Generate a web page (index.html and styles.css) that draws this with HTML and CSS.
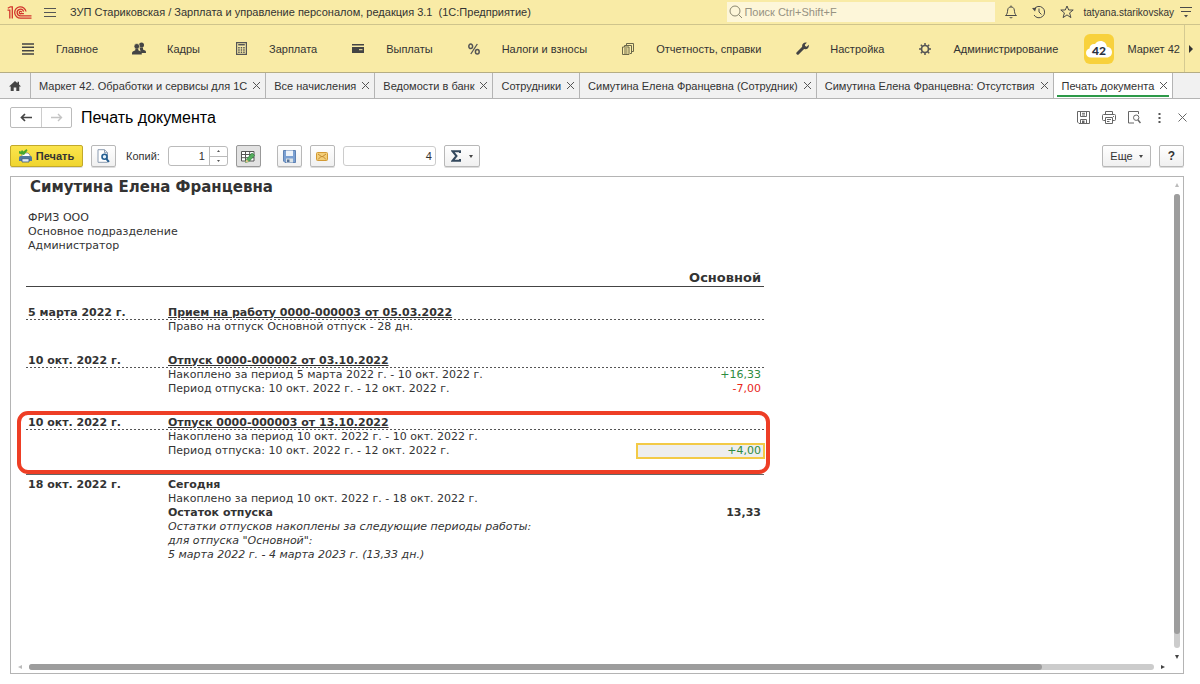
FILE: index.html
```
<!DOCTYPE html>
<html lang="ru">
  <head>
    <meta charset="UTF-8" />
    <meta name="viewport" content="width=device-width, initial-scale=1.0" />
    <title>Печать документа</title>
    <link rel="stylesheet" href="styles.css">
  </head>

  <body>
    <header class="titlebar">
      <svg class="logo" width="25" height="13" viewBox="0 0 25 13" fill="none" stroke="#d2352c" stroke-width="1.3">
        <path d="M0.5 4.2h2.3v8.3M0.8 2.2L3.4 0.8h1.9v11.7" />
        <path d="M19 5.5A5.7 5.7 0 1 0 13.600 12.200H24.500" />
        <path d="M16.600 5.600A3.300 3.300 0 1 0 13.600 9.800H24.500" />
        <path d="M14.700 6.300a1.200 1.200 0 1 0-.8 1.400h3" />
      </svg>
      <button class="icon_btn burger" aria-label="Меню">
        <svg width="12" height="11" viewBox="0 0 12 11" stroke="#555" stroke-width="1"><path d="M0 1.500h12M0 5.500h12M0 9.500h12" /></svg>
      </button>
      <span class="app_title">ЗУП Стариковская / Зарплата и управление персоналом, редакция 3.1&nbsp; (1С:Предприятие)</span>
      <label class="search">
        <svg width="14" height="14" viewBox="0 0 14 14" fill="none" stroke="#8b8770"><circle cx="6" cy="6" r="5" /><path d="M9.500 9.500l3.500 3.500" /></svg>
        <input type="text" placeholder="Поиск Ctrl+Shift+F" aria-label="Поиск" />
      </label>
      <div class="user_tools">
        <button class="icon_btn" aria-label="Уведомления">
          <svg width="14" height="14" viewBox="0 0 14 14" fill="none" stroke="#4a4a4a"><path d="M1.500 10.500c2-1.500 1.800-3 2.200-5.500C4 2.700 5.300 2 7 2s3 .7 3.300 3c.4 2.500.2 4 2.200 5.500z" /><path d="M7 2V.5" /><path d="M5 12.200h4L7 13.500z" fill="#4a4a4a" stroke="none" /></svg>
        </button>
        <button class="icon_btn" aria-label="История">
          <svg width="14" height="14" viewBox="0 0 14 14" fill="none" stroke="#4a4a4a"><path d="M2 4.200A5.700 5.700 0 1 1 2 10" /><path d="M7 3.500V7l2.500 2.500" /><path d="M0 3l4.300-.2L3 6.500z" fill="#4a4a4a" stroke="none" /></svg>
        </button>
        <button class="icon_btn" aria-label="Избранное">
          <svg width="14" height="14" viewBox="0 0 14 14" fill="none" stroke="#4a4a4a"><path d="M7 1l1.700 4h4.500L9.600 7.900l1.300 4.700L7 9.900l-3.900 2.700 1.300-4.700L.8 5h4.500z" /></svg>
        </button>
        <a class="user" href="#">tatyana.starikovskay</a>
        <button class="icon_btn" aria-label="Настройки окна">
          <svg width="12" height="12" viewBox="0 0 12 12"><path d="M0 1.500h12M1 5.500h10" stroke="#4a4a4a" /><path d="M4 9h4l-2 2.500z" fill="#4a4a4a" /></svg>
        </button>
      </div>
    </header>

    <nav class="sections">
      <a href="#"><span class="section_icon"><svg width="12" height="12" viewBox="0 0 12 12" stroke="#444" stroke-width="1.400"><path d="M0 1h12M0 4.300h12M0 7.700h12M0 11h12" /></svg></span>Главное</a>
      <a href="#"><span class="section_icon"><svg width="14" height="13" viewBox="0 0 14 13" fill="#444"><circle cx="9.500" cy="3" r="2.500" /><path d="M7.500 5.500h3.500v2l2.500 1.200c.4.300.5 1 .5 2.300H9z" /><circle cx="4.800" cy="4.300" r="2.800" stroke="#f9eba6" stroke-width=".7" /><path d="M3.300 6.500h3v1.700L9 9.500c.7.400.8 1.500.8 3H0c0-1.500.1-2.600.8-3l2.500-1.300z" /></svg></span>Кадры</a>
      <a href="#"><span class="section_icon"><svg width="11" height="13" viewBox="0 0 11 13"><path d="M.6.600h9.800v11.800H.6z" fill="none" stroke="#555" stroke-width="1.200" /><path d="M2.200 2.700h6.600" stroke="#555" stroke-width="1.500" /><path d="M2.200 5.700h6.600M2.200 8h6.600M2.200 10.300h6.600" stroke="#555" stroke-width="1.500" stroke-dasharray="1.500 1" /></svg></span>Зарплата</a>
      <a href="#"><span class="section_icon"><svg width="12" height="9" viewBox="0 0 12 9"><path d="M0 0h12v1.500H0zM0 3h12v6H0z" fill="#444" /><path d="M7 5.700h3.500" stroke="#f9eba6" /></svg></span>Выплаты</a>
      <a href="#"><span class="section_icon"><svg width="12" height="12" viewBox="0 0 12 12" fill="none" stroke="#555" stroke-width="1.500"><ellipse cx="2.700" cy="3.300" rx="1.900" ry="2.300" /><ellipse cx="9.300" cy="8.700" rx="1.900" ry="2.300" /><path d="M9.300 1L2.800 11" stroke-width="1.300" /></svg></span>Налоги и взносы</a>
      <a href="#"><span class="section_icon"><svg width="12" height="12" viewBox="0 0 12 12" fill="none" stroke="#6b6749"><path d="M4.500 2V.5h7v8H10M2.500 4V2.500h7v8H8" /><path d="M.5 4h6.500v7.500H.5zM2 6h3.500M2 8h3.500M2 10h3.500" /></svg></span>Отчетность, справки</a>
      <a href="#"><span class="section_icon"><svg width="13" height="13" viewBox="0 0 13 13"><path d="M1.800 11.200L8 5" stroke="#444" stroke-width="3" stroke-linecap="round" /><path d="M10.800.7L8.800 2.800l.4 1.500 1.500.4 2-2c.7 2.300-.8 4.600-3.200 4.600-1.900 0-3.400-1.500-3.400-3.500C6.100 1.500 8.500-.1 10.800.7z" fill="#444" /></svg></span>Настройка</a>
      <a href="#"><span class="section_icon"><svg width="12" height="12" viewBox="0 0 12 12" fill="none" stroke="#555"><circle cx="6" cy="6" r="3.500" stroke-width="1.700" /><path d="M6 0v2.500M6 9.500V12M0 6h2.500M9.500 6H12M1.800 1.800l1.700 1.700M8.500 8.500l1.700 1.700M10.200 1.800L8.500 3.500M3.500 8.500l-1.700 1.700" stroke-width="1.500" /></svg></span>Администрирование</a>
      <a href="#"><span class="section_icon market"><svg width="30" height="30" viewBox="0 0 30 30"><rect width="30" height="30" rx="6" fill="#f8d13c" /><path d="M7 23.500c-3 0-5-2-5-4.500 0-2.300 1.500-4 3.500-4.400C5.500 11.500 8 9.500 11 10c1.300-2 3.300-3 5.500-3 3.600 0 6 2.400 6.300 5.700 3 .1 5.200 2.300 5.200 5.300 0 3.200-2.200 5.500-5.300 5.500z" fill="#fff" /><text x="15" y="21" text-anchor="middle">42</text></svg></span>Маркет 42</a>
      <button class="scroll_right" aria-label="Дальше"><svg width="4" height="8" viewBox="0 0 4 8"><path d="M0 0l4 4-4 4z" fill="#333" /></svg></button>
    </nav>

    <div class="tabs">
      <button class="home" aria-label="Начальная страница"><svg width="12" height="10" viewBox="0 0 12 10" fill="#444"><path d="M6 0L0 5.500h1.700V10h3V6.500h2.600V10h3V5.500H12L10 3.600V.7H8.500v1.500z" /></svg></button>
      <div class="tab"><a href="#">Маркет 42. Обработки и сервисы для 1С</a><button class="close" aria-label="Закрыть"></button></div>
      <div class="tab"><a href="#">Все начисления</a><button class="close" aria-label="Закрыть"></button></div>
      <div class="tab"><a href="#">Ведомости в банк</a><button class="close" aria-label="Закрыть"></button></div>
      <div class="tab"><a href="#">Сотрудники</a><button class="close" aria-label="Закрыть"></button></div>
      <div class="tab"><a href="#">Симутина Елена Францевна (Сотрудник)</a><button class="close" aria-label="Закрыть"></button></div>
      <div class="tab"><a href="#">Симутина Елена Францевна: Отсутствия</a><button class="close" aria-label="Закрыть"></button></div>
      <div class="tab active"><a href="#">Печать документа</a><button class="close" aria-label="Закрыть"></button></div>
    </div>

    <main class="form">
      <div class="form_head">
        <div class="history">
          <button aria-label="Назад"><svg width="12" height="9" viewBox="0 0 12 9" fill="none" stroke="#444" stroke-width="1.700"><path d="M12 4.500H1.500M5 1L1.500 4.500 5 8" /></svg></button>
          <button aria-label="Вперед" disabled><svg width="12" height="9" viewBox="0 0 12 9" fill="none" stroke="#c4c4c4" stroke-width="1.400"><path d="M0 4.500h10.500M7 1l3.500 3.500L7 8" /></svg></button>
        </div>
        <h1>Печать документа</h1>
        <div class="form_tools">
          <button class="icon_btn" aria-label="Сохранить"><svg width="13" height="13" viewBox="0 0 13 13" fill="none" stroke="#666"><path d="M.5.500h12v12H2L.5 11zM3.500.500v5h6v-5M5 2.300h3M5 4h3M3.500 12.500v-4h6v4" /><path d="M5 9.500h2.500v2.500H5z" fill="#666" stroke="none" /></svg></button>
          <button class="icon_btn" aria-label="Печать"><svg width="14" height="13" viewBox="0 0 14 13" fill="none" stroke="#666"><path d="M3.500 3.500v-3h7v3M3.500 9.500H1.500q-1 0-1-1v-4q0-1 1-1h11q1 0 1 1v4q0 1-1 1h-2" /><path d="M3.500 6.500h7v6h-7zM5 8.500h4M5 10.500h2.500M11 5.500h1" /></svg></button>
          <button class="icon_btn" aria-label="Просмотр"><svg width="13" height="13" viewBox="0 0 13 13" fill="none" stroke="#666"><path d="M10.500 3V.5H.5v11.500H6" /><circle cx="8.200" cy="6.700" r="2.700" /><path d="M10 9l2.500 3" stroke-width="1.500" /></svg></button>
          <button class="icon_btn" aria-label="Еще"><svg width="13" height="10" viewBox="0 0 13 10" fill="#555"><path d="M5.500 0h2v2h-2zM5.500 4h2v2h-2zM5.500 8h2v2h-2z" /></svg></button>
          <button class="icon_btn" aria-label="Закрыть"><svg width="9" height="9" viewBox="0 0 9 9" stroke="#666"><path d="M.5.500l8 8M8.500.500l-8 8" /></svg></button>
        </div>
      </div>

      <div class="toolbar">
        <button class="btn print">
          <svg width="13" height="14" viewBox="0 0 13 14"><path d="M3 4h6l2 2v2H3z" fill="#fff" stroke="#678" stroke-width=".7" /><path d="M1.500 7h10q1.500 0 1.500 1.500v3.500H0V8.500Q0 7 1.500 7z" fill="#52799e" /><path d="M3 9.700h7V13H3z" fill="#dfeaf5" stroke="#38597b" stroke-width=".8" /><path d="M0 2l2 .5L3 1l1.500 1.500L7.500 0l1 1.500L5 6 0 4.500z" fill="#45a82d" /></svg>
          Печать
        </button>
        <button class="btn square" aria-label="Предварительный просмотр">
          <svg width="13" height="14" viewBox="0 0 13 14" fill="none"><path d="M1 .7h6.500l3 3v9.600H1z" fill="#fff" stroke="#8a9bb0" /><path d="M7.500.7v3h3" stroke="#8a9bb0" /><circle cx="7.500" cy="7.700" r="2.500" stroke="#255f92" stroke-width="1.600" fill="#e6f2fb" /><path d="M9.300 9.800l2.700 3" stroke="#255f92" stroke-width="2" /></svg>
        </button>
        <label class="copies_label" for="copies">Копий:</label>
        <div class="copies">
          <input type="text" id="copies" value="1" />
          <div class="spin">
            <button aria-label="Больше"><svg width="3" height="2" viewBox="0 0 3 2"><path d="M0 2h3L1.500 0z" fill="#555" /></svg></button>
            <button aria-label="Меньше"><svg width="3" height="2" viewBox="0 0 3 2"><path d="M0 0h3L1.500 2z" fill="#555" /></svg></button>
          </div>
        </div>
        <button class="btn square pressed" aria-label="Редактирование">
          <svg width="14" height="13" viewBox="0 0 14 13"><path d="M.5 1.500h12.500v9.500H.5z" fill="#fff" /><path d="M.5 1.500h12.500v9.500H.5zM.5 4.500h12.500M.5 7.700h12.500M4.500 1.500v9.500M8.700 1.500v9.500" fill="none" stroke="#555" /><path d="M4.500 12.500l.8-3L11 3l2.700 2.300L8 11.500z" fill="#53ad5c" stroke="#2f7d3b" stroke-width=".6" /><path d="M4.500 12.500l.8-3L8 11.500z" fill="#e9c58c" /></svg>
        </button>
        <button class="btn square group_start" aria-label="Сохранить">
          <svg width="13" height="13" viewBox="0 0 13 13"><path d="M.5.500h12v12H2L.5 11z" fill="#7ba0d2" stroke="#5f82b3" /><path d="M3 .500h7v5.500H3z" fill="#eef3f9" /><path d="M3 8.500h7v4H3z" fill="#dce3e6" /><path d="M4 9.500h2.500v2.500H4z" fill="#577195" /></svg>
        </button>
        <button class="btn square" aria-label="Отправить по почте">
          <svg width="12" height="9" viewBox="0 0 12 9"><rect x=".5" y=".5" width="11" height="8" rx="1" fill="#f3ce78" stroke="#d39a34" /><path d="M2 2l4 3 4-3M2 7.500l3-3M10 7.500l-3-3" fill="none" stroke="#b87a20" stroke-width=".8" /></svg>
        </button>
        <input class="sum_field" type="text" value="4" aria-label="Сумма" />
        <button class="btn sigma" aria-label="Сумма">
          <svg width="10" height="12" viewBox="0 0 10 12"><path d="M9 3V1.200H1.500L5.500 6l-4 4.800H9V9" fill="none" stroke="#34495e" stroke-width="2" /></svg>
          <span class="caret"></span>
        </button>
        <button class="btn more">Еще <span class="caret"></span></button>
        <button class="btn help">?</button>
      </div>

      <div class="viewer">
        <div class="sheet">
          <h2>Симутина Елена Францевна</h2>
          <p class="employee">
            ФРИЗ ООО<br />
            Основное подразделение<br />
            Администратор
          </p>

          <table class="report">
            <thead>
              <tr>
                <th class="date"></th>
                <th></th>
                <th class="amount">Основной</th>
              </tr>
            </thead>
            <tbody>
              <tr class="event"><td>5 марта 2022 г.</td><td><a href="#">Прием на работу 0000-000003 от 05.03.2022</a></td><td></td></tr>
              <tr><td></td><td>Право на отпуск Основной отпуск - 28 дн.</td><td></td></tr>
              <tr class="space"><td colspan="3"></td></tr>
            </tbody>
            <tbody>
              <tr class="event"><td>10 окт. 2022 г.</td><td><a href="#">Отпуск 0000-000002 от 03.10.2022</a></td><td></td></tr>
              <tr><td></td><td>Накоплено за период 5 марта 2022 г. - 10 окт. 2022 г.</td><td class="amount plus">+16,33</td></tr>
              <tr><td></td><td>Период отпуска: 10 окт. 2022 г. - 12 окт. 2022 г.</td><td class="amount minus">-7,00</td></tr>
              <tr class="space"><td colspan="3"></td></tr>
            </tbody>
            <tbody class="marked">
              <tr class="event"><td>10 окт. 2022 г.<span class="frame"></span></td><td><a href="#">Отпуск 0000-000003 от 13.10.2022</a></td><td></td></tr>
              <tr><td></td><td>Накоплено за период 10 окт. 2022 г. - 10 окт. 2022 г.</td><td></td></tr>
              <tr><td></td><td>Период отпуска: 10 окт. 2022 г. - 12 окт. 2022 г.</td><td class="amount plus selected">+4,00</td></tr>
              <tr class="space"><td colspan="3"></td></tr>
            </tbody>
            <tbody class="today">
              <tr class="bold"><td>18 окт. 2022 г.</td><td>Сегодня</td><td></td></tr>
              <tr><td></td><td>Накоплено за период 10 окт. 2022 г. - 18 окт. 2022 г.</td><td></td></tr>
              <tr class="bold"><td></td><td>Остаток отпуска</td><td class="amount">13,33</td></tr>
              <tr class="note"><td></td><td>Остатки отпусков накоплены за следующие периоды работы:</td><td></td></tr>
              <tr class="note"><td></td><td>для отпуска "Основной":</td><td></td></tr>
              <tr class="note"><td></td><td>5 марта 2022 г. - 4 марта 2023 г. (13,33 дн.)</td><td></td></tr>
            </tbody>
          </table>
        </div>

        <div class="vscroll">
          <svg width="4" height="4" viewBox="0 0 4 4"><path d="M0 4h4L2 0z" fill="#bbb" /></svg>
          <div class="track"><div class="thumb"></div></div>
          <svg width="4" height="4" viewBox="0 0 4 4"><path d="M0 0h4L2 4z" fill="#444" /></svg>
        </div>
        <div class="hscroll">
          <svg width="4" height="4" viewBox="0 0 4 4"><path d="M4 0v4L0 2z" fill="#bbb" /></svg>
          <div class="track"><div class="thumb"></div></div>
          <svg width="4" height="4" viewBox="0 0 4 4"><path d="M0 0v4l4-2z" fill="#444" /></svg>
        </div>
      </div>
    </main>
  </body>
</html>
```

FILE: styles.css
```
* {
  box-sizing: border-box;
}

html,
body {
  width: 100%;
  height: 100%;
  margin: 0;
  padding: 0;
}

body {
  display: flex;
  flex-direction: column;
  font-family: "Liberation Sans", Arial, sans-serif;
  font-size: 11px;
  color: #333;
  background-color: #fff;
}

button,
input {
  font-family: inherit;
  font-size: inherit;
  color: inherit;
  margin: 0;
}

button {
  display: flex;
  justify-content: center;
  align-items: center;
  padding: 0;
  border: none;
  background: none;
  cursor: pointer;
}

a {
  color: inherit;
  text-decoration: none;
}

svg {
  flex: none;
  display: block;
}

/* top bar */
.titlebar {
  display: flex;
  align-items: center;
  height: 25px;
  padding: 0 8px 0 7px;
  border-bottom: 1px solid #cfc48c;
  background-color: #f9eba6;
  white-space: nowrap;
}

.burger {
  margin: 0 14px 0 12px;
}

.search {
  display: flex;
  align-items: center;
  gap: 1px;
  width: 268px;
  height: 20px;
  margin-left: auto;
  padding: 0 2px;
  background-color: #fdf6d9;
}

.search input {
  flex: 1;
  min-width: 0;
  border: none;
  padding: 0;
  outline: none;
  background: none;
}

.search input::placeholder {
  color: #969282;
}

.user_tools {
  display: flex;
  align-items: center;
  gap: 14px;
  margin-left: 9px;
}

.user {
  margin: 0 -8px 0 -5px;
  font-size: 10px;
}

/* sections panel */
.sections {
  display: flex;
  align-items: center;
  gap: 26px;
  height: 48px;
  padding-left: 13px;
  border-bottom: 1px solid #b5ad84;
  background-color: #f9eba6;
  white-space: nowrap;
  overflow: hidden;
}

.sections a {
  display: flex;
  align-items: center;
  gap: 13px;
}

.section_icon {
  display: flex;
  justify-content: center;
  width: 30px;
}

.market text {
  font-family: Lato, sans-serif;
  font-size: 12px;
  font-weight: 900;
  fill: #2a3142;
}

.scroll_right {
  flex: none;
  width: 14px;
  height: 100%;
  margin-left: -22px;
  border-left: 1px solid #d5ca92;
}

/* open windows */
.tabs {
  display: flex;
  height: 26px;
  border-bottom: 1px solid #b4b4b4;
  background-color: #f1f1f1;
  white-space: nowrap;
}

.home {
  width: 30px;
}

.tab {
  display: flex;
  align-items: center;
  gap: 6px;
  padding: 0 5px 0 8px;
  border-left: 1px solid #b4b4b4;
}

.tab.active {
  border-right: 1px solid #b4b4b4;
  background: linear-gradient(#2d9a49, #2d9a49) center bottom 1px / calc(100% - 6px) 2px no-repeat #fff;
}

.close {
  width: 7px;
  height: 7px;
  background:
    linear-gradient(45deg, transparent 44%, #555 44%, #555 56%, transparent 56%),
    linear-gradient(-45deg, transparent 44%, #555 44%, #555 56%, transparent 56%);
}

/* form */
.form {
  flex: 1;
  min-height: 0;
  display: flex;
  flex-direction: column;
  padding: 8px 16px 10px 10px;
}

.form_head {
  display: flex;
  align-items: center;
  height: 21px;
}

.history {
  display: flex;
  height: 21px;
  border: 1px solid #bbb;
  border-radius: 2px;
}

.history button {
  width: 30px;
}

.history button + button {
  border-left: 1px solid #ccc;
}

h1 {
  margin: 0 0 0 9px;
  font-size: 16px;
  font-weight: normal;
  color: #000;
}

.form_tools {
  display: flex;
  align-items: center;
  gap: 12px;
  margin: 0 -3px 0 auto;
}

.toolbar {
  display: flex;
  align-items: center;
  gap: 8px;
  margin: 17px 0 9px;
}

.btn {
  height: 22px;
  border: 1px solid #b8b8b8;
  border-radius: 2px;
  background: linear-gradient(#fff, #f0f0f0);
  box-shadow: 0 1px 0 #ddd;
}

.square,
.help {
  width: 25px;
}

.print {
  gap: 4px;
  width: 73px;
  border-color: #c2a92b;
  background: linear-gradient(#fbe44d, #f0d52f);
  font-weight: bold;
}

.pressed {
  border-color: #999;
  background: #e2e2e2;
}

.group_start {
  margin-left: 8px;
}

.copies_label {
  margin-left: 2px;
}

.copies {
  display: flex;
  width: 60px;
  height: 20px;
  border: 1px solid #bbb;
  border-radius: 3px;
}

.copies input {
  flex: 1;
  min-width: 0;
  padding: 0 4px;
  border: none;
  background: none;
  text-align: right;
}

.spin {
  display: flex;
  flex-direction: column;
  width: 18px;
  border-left: 1px solid #bbb;
}

.spin button {
  flex: 1;
}

.spin button + button {
  border-top: 1px solid #bbb;
}

.sum_field {
  width: 93px;
  height: 20px;
  padding: 0 3px;
  border: 1px solid #ccc;
  border-radius: 3px;
  text-align: right;
}

.sigma {
  gap: 8px;
  width: 36px;
}

.caret {
  border: 2px solid transparent;
  border-top: 3px solid #444;
  border-bottom: none;
}

.more {
  gap: 6px;
  width: 49px;
  margin-left: auto;
}

.help {
  font-size: 12px;
  font-weight: bold;
}

/* spreadsheet area */
.viewer {
  flex: 1;
  min-height: 0;
  display: grid;
  grid-template-columns: 1fr 12px;
  grid-template-rows: 1fr 12px;
  border: 1px solid #b4b4b4;
}

.sheet {
  padding: 0 15px;
  overflow: hidden;
  font-family: Verdana, "DejaVu Sans", sans-serif;
  line-height: 14px;
}

h2 {
  margin: 0 0 14px;
  padding-left: 4px;
  font-size: 15px;
  line-height: 20px;
}

.employee {
  margin: 0;
  padding-left: 2px;
}

.report {
  width: 100%;
  max-width: 738px;
  margin-top: 17px;
  border-collapse: collapse;
}

td,
th {
  height: 14px;
  padding: 0 2px;
  text-align: left;
  white-space: nowrap;
}

th {
  height: 16px;
  border-bottom: 1px solid #444;
  font-size: 13px;
}

.report .date {
  width: 140px;
}

.report .amount {
  width: 127px;
  padding-right: 3px;
  text-align: right;
}

thead::after {
  content: "";
  display: block;
  height: 19px;
}

.event,
.bold {
  font-weight: bold;
}

.event {
  background: repeating-linear-gradient(90deg, #555 0 2px, transparent 2px 4px) left bottom / 100% 1px no-repeat;
}

.event a {
  text-decoration: underline;
}

.report .space td {
  height: 20px;
}

.plus {
  color: #2d8b3e;
}

.minus {
  color: #e8261c;
}

.selected {
  background-color: #eee;
  outline: 2px solid #f3ca46;
  outline-offset: -1px;
}

.note {
  font-style: italic;
}

.marked {
  position: relative;
}

.report .marked .space td {
  height: 17px;
}

/* red frame over the marked event */
.frame {
  position: absolute;
  inset: -5px -6px 1px -9px;
  border: 4px solid #ee3e25;
  border-radius: 11px;
}

.today {
  border-top: 1px solid #666;
}

.today tr:first-child td {
  height: 17px;
  vertical-align: bottom;
}

/* scrollbars */
.vscroll,
.hscroll {
  display: flex;
  align-items: center;
  gap: 7px;
}

.vscroll {
  flex-direction: column;
  padding: 6px 0 2px;
}

.hscroll {
  padding: 0 6px 0 7px;
}

.track {
  flex: 1;
  border-radius: 3px;
  background-color: #ccc;
}

.thumb {
  border-radius: 3px;
  background-color: #9d9d9d;
}

.vscroll .track {
  width: 6px;
}

.vscroll .thumb {
  height: 97%;
}

.hscroll .track {
  height: 6px;
}

.hscroll .thumb {
  width: 90%;
  height: 6px;
}
```
